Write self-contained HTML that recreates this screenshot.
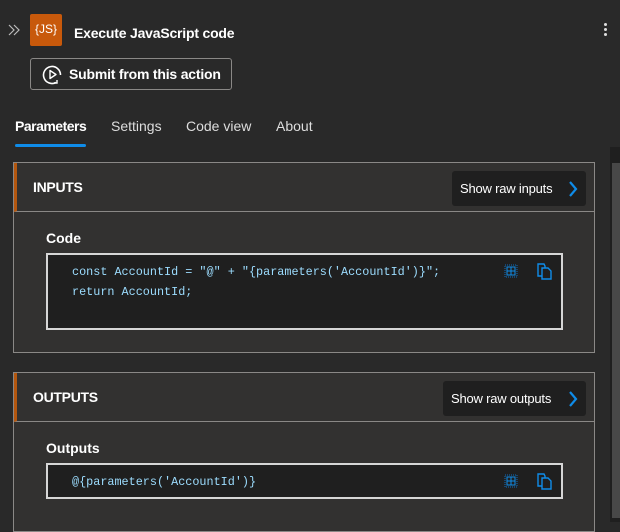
<!DOCTYPE html>
<html><head><style>
*{box-sizing:border-box;margin:0;padding:0}
body{width:620px;height:522px;overflow:hidden;background:#292929;font-family:"Liberation Sans",sans-serif;color:#fff;position:relative}
.a{position:absolute}
.mono{font-family:"Liberation Mono",monospace;font-size:11.8px;color:#9cdcfe;white-space:pre}
.panel{position:absolute;left:13px;width:582px;background:#323130;border:1px solid #8a8886}
.hdr{height:49px;border-bottom:1px solid #8a8886;position:relative;border-left:3px solid #b4570f}
.hdr .t{position:absolute;left:16px;top:16px;font-weight:bold;font-size:14px;letter-spacing:-0.3px}
.btn{position:absolute;right:8px;top:8px;height:35px;background:#1f1f1f;border-radius:3px;font-size:13px;padding:10px 30px 0 8px;letter-spacing:-0.2px}
.btn svg{position:absolute;right:8px;top:10px}
.code{position:absolute;left:32px;width:517px;background:#1f1f1f;border:2px solid #d6d6d6}
</style></head><body>
<svg class="a" style="left:7px;top:23px" width="14" height="14" viewBox="0 0 14 14"><path d="M2 2l5 5-5 5M7 2l5 5-5 5" stroke="#bbb" stroke-width="1.2" fill="none"/></svg>
<div class="a" style="left:30px;top:14px;width:32px;height:32px;background:#c8590b;border-radius:2px;color:#fff;font-size:12px;text-align:center;line-height:31px">{JS}</div>
<div class="a" style="left:74px;top:25px;font-size:14px;font-weight:bold;letter-spacing:-0.2px">Execute JavaScript code</div>
<div class="a" style="left:604px;top:23px;width:3px;height:3px;background:#ddd;border-radius:2px;box-shadow:0 5px 0 #ddd,0 10px 0 #ddd"></div>
<div class="a" style="left:30px;top:58px;width:202px;height:32px;border:1px solid #8a8886;border-radius:3px"></div>
<svg class="a" style="left:42px;top:64px" width="21" height="21" viewBox="0 0 21 21"><path d="M14 18.5A8.5 8.5 0 1 1 18.5 11" stroke="#fff" stroke-width="1.6" fill="none"/><path d="M8 6.5v8l6-4z" stroke="#fff" stroke-width="1.4" fill="none" stroke-linejoin="round"/><path d="M12 19h3v-3" stroke="#fff" stroke-width="1.4" fill="none"/></svg>
<div class="a" style="left:69px;top:66px;font-size:14px;font-weight:bold;letter-spacing:-0.2px">Submit from this action</div>
<div class="a" style="left:15px;top:118px;font-size:14px;font-weight:bold;letter-spacing:-0.5px">Parameters</div>
<div class="a" style="left:15px;top:144px;width:71px;height:3px;background:#0f8ce9;border-radius:2px"></div>
<div class="a" style="left:111px;top:118px;font-size:14px;color:#ddd">Settings</div>
<div class="a" style="left:186px;top:118px;font-size:14px;color:#ddd">Code view</div>
<div class="a" style="left:276px;top:118px;font-size:14px;color:#ddd">About</div>
<div class="a" style="left:610px;top:147px;width:10px;height:375px;background:#1f1f1f"></div>
<div class="a" style="left:612px;top:163px;width:8px;height:355px;background:#484848"></div>

<div class="panel" style="top:162px;height:191px">
 <div class="hdr"><div class="t">INPUTS</div><div class="btn" style="width:134px">Show raw inputs<svg width="10" height="16" viewBox="0 0 10 16"><path d="M2 1l6 7-6 7" stroke="#0f8ce9" stroke-width="2.2" fill="none"/></svg></div></div>
 <div class="a" style="left:32px;top:67px;font-size:14px;font-weight:bold">Code</div>
 <div class="code" style="top:90px;height:77px">
  <div class="mono a" style="left:24px;top:7px;line-height:20px">const AccountId = "@" + "{parameters('AccountId')}";
return AccountId;</div>
  <svg class="a" style="left:456px;top:9px" width="14" height="14"><rect x="1" y="1" width="12" height="12" stroke="#0f6cbd" stroke-dasharray="1 1" fill="none"/><rect x="3" y="3" width="8" height="8" stroke="#0f8ce9" fill="none"/><path d="M7 3v8M3 7h8" stroke="#0f8ce9"/></svg>
  <svg class="a" style="left:489px;top:8px" width="15" height="17"><path d="M1 1h6l1 2v10H1z" stroke="#0f8ce9" stroke-width="1.4" fill="none"/><path d="M5 5h6l3 3v8H5z" stroke="#0f8ce9" stroke-width="1.4" fill="#1f1f1f"/></svg>
 </div>
</div>

<div class="panel" style="top:372px;height:160px">
 <div class="hdr"><div class="t">OUTPUTS</div><div class="btn" style="width:143px">Show raw outputs<svg width="10" height="16" viewBox="0 0 10 16"><path d="M2 1l6 7-6 7" stroke="#0f8ce9" stroke-width="2.2" fill="none"/></svg></div></div>
 <div class="a" style="left:32px;top:67px;font-size:14px;font-weight:bold">Outputs</div>
 <div class="code" style="top:90px;height:36px">
  <div class="mono a" style="left:24px;top:10px">@{parameters('AccountId')}</div>
  <svg class="a" style="left:456px;top:9px" width="14" height="14"><rect x="1" y="1" width="12" height="12" stroke="#0f6cbd" stroke-dasharray="1 1" fill="none"/><rect x="3" y="3" width="8" height="8" stroke="#0f8ce9" fill="none"/><path d="M7 3v8M3 7h8" stroke="#0f8ce9"/></svg>
  <svg class="a" style="left:489px;top:8px" width="15" height="17"><path d="M1 1h6l1 2v10H1z" stroke="#0f8ce9" stroke-width="1.4" fill="none"/><path d="M5 5h6l3 3v8H5z" stroke="#0f8ce9" stroke-width="1.4" fill="#1f1f1f"/></svg>
 </div>
</div>
</body></html>
